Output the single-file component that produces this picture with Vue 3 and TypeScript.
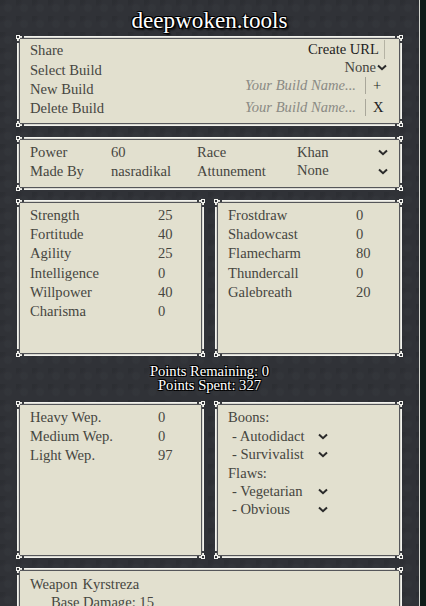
<script setup lang="ts">
const attrs = [
  ['Strength', 25], ['Fortitude', 40], ['Agility', 25],
  ['Intelligence', 0], ['Willpower', 40], ['Charisma', 0],
]
const elements = [
  ['Frostdraw', 0], ['Shadowcast', 0], ['Flamecharm', 80],
  ['Thundercall', 0], ['Galebreath', 20],
]
const weapons = [['Heavy Wep.', 0], ['Medium Wep.', 0], ['Light Wep.', 97]]
const corners = ['tl', 'tr', 'bl', 'br']
</script>

<template>
  <div class="page">
    <main class="content">
      <h1 class="title">deepwoken.tools</h1>

      <section class="panel build">
        <i v-for="c in corners" :key="c" class="corner" :class="c"></i>
        <div class="build-row r1">
          <span>Share</span>
          <span class="url">Create URL</span>
        </div>
        <div class="build-row r2">
          <span>Select Build</span>
          <span class="none">None<svg class="chev" viewBox="0 0 10 7"><path d="M1 1.5 5 5.2 9 1.5" /></svg></span>
        </div>
        <div class="build-row r3">
          <span>New Build</span>
          <span class="field"><em>Your Build Name...</em><b class="plus">+</b></span>
        </div>
        <div class="build-row r4">
          <span>Delete Build</span>
          <span class="field"><em>Your Build Name...</em><b class="x">X</b></span>
        </div>
      </section>

      <section class="panel info">
        <i v-for="c in corners" :key="c" class="corner" :class="c"></i>
        <div class="info-grid">
          <span>Power</span><span>60</span><span>Race</span>
          <span class="pick">Khan<svg class="chev" viewBox="0 0 10 7"><path d="M1 1.5 5 5.2 9 1.5" /></svg></span>
          <span>Made By</span><span>nasradikal</span><span>Attunement</span>
          <span class="pick up">None<svg class="chev" viewBox="0 0 10 7"><path d="M1 1.5 5 5.2 9 1.5" /></svg></span>
        </div>
      </section>

      <div class="pair">
        <section class="panel tall">
          <i v-for="c in corners" :key="c" class="corner" :class="c"></i>
          <div v-for="a in attrs" :key="a[0]" class="stat"><span>{{ a[0] }}</span><span>{{ a[1] }}</span></div>
        </section>
        <section class="panel tall">
          <i v-for="c in corners" :key="c" class="corner" :class="c"></i>
          <div v-for="a in elements" :key="a[0]" class="stat"><span>{{ a[0] }}</span><span>{{ a[1] }}</span></div>
        </section>
      </div>

      <div class="points">
        <div>Points Remaining: 0</div>
        <div>Points Spent: 327</div>
      </div>

      <div class="pair">
        <section class="panel tall">
          <i v-for="c in corners" :key="c" class="corner" :class="c"></i>
          <div v-for="a in weapons" :key="a[0]" class="stat"><span>{{ a[0] }}</span><span>{{ a[1] }}</span></div>
        </section>
        <section class="panel tall talents">
          <i v-for="c in corners" :key="c" class="corner" :class="c"></i>
          <div class="tlabel">Boons:</div>
          <div class="talent first"><span>- Autodidact</span><svg class="chev" viewBox="0 0 10 7"><path d="M1 1.5 5 5.2 9 1.5" /></svg></div>
          <div class="talent"><span>- Survivalist</span><svg class="chev" viewBox="0 0 10 7"><path d="M1 1.5 5 5.2 9 1.5" /></svg></div>
          <div class="tlabel">Flaws:</div>
          <div class="talent second"><span>- Vegetarian</span><svg class="chev" viewBox="0 0 10 7"><path d="M1 1.5 5 5.2 9 1.5" /></svg></div>
          <div class="talent"><span>- Obvious</span><svg class="chev" viewBox="0 0 10 7"><path d="M1 1.5 5 5.2 9 1.5" /></svg></div>
        </section>
      </div>

      <section class="panel weapon">
        <i v-for="c in corners" :key="c" class="corner" :class="c"></i>
        <div class="wline"><span>Weapon</span><span>Kyrstreza</span></div>
        <div class="wsub">Base Damage: 15</div>
      </section>
    </main>
    <div class="edge"></div>
  </div>
</template>

<style>
html, body { margin: 0; height: 100%; overflow: hidden; background: #2e3035; }
</style>

<style scoped>
.page {
  display: flex;
  height: 606px;
  overflow: hidden;
  font: 14.6px/19.2px "Liberation Serif", serif;
  color: #46463f;
}
.content {
  width: 419px;
  flex: none;
  box-sizing: border-box;
  padding: 0 16px;
  background-color: #303237;
  background-image:
    radial-gradient(circle at 50% 50%, rgba(70, 74, 80, .14) 0 3px, transparent 5px),
    radial-gradient(circle at 0 0, rgba(20, 22, 26, .12) 0 4px, transparent 7px);
  background-size: 16px 16px;
}
.edge {
  flex: 1;
  background: #0e1c18;
  border-left: 1px solid #d5d7d0;
}
.title {
  margin: 0;
  height: 36px;
  box-sizing: border-box;
  padding-top: 6px;
  text-align: center;
  font: 400 23.1px/28px "Liberation Serif", serif;
  color: #fff;
  text-shadow: 1px 1px 0 #000, -1px 1px 0 #000, 1px -1px 0 #000, -1px -1px 0 #000, 2px 2px 2px #000;
}
.panel {
  position: relative;
  box-sizing: border-box;
  background: #e2e0cf padding-box;
  border: solid transparent;
  border-width: 0 1px;
  box-shadow: inset 0 0 0 1px #f2f2ee, inset 0 0 0 2px #d8d8d0, inset 0 0 0 3px #55565a;
  margin-bottom: 10px;
}
.corner {
  position: absolute;
  width: 2px;
  height: 2px;
  border: 1px solid #f4f4f0;
  background: #34363a;
}
.corner::before, .corner::after {
  content: "";
  position: absolute;
  width: 2px;
  height: 2px;
  background: #3a3c40;
}
.tl { left: -1px; top: -1px; }
.tr { right: -1px; top: -1px; }
.bl { left: -1px; bottom: -1px; }
.br { right: -1px; bottom: -1px; }
.tl::before { left: 5px; top: 0; }
.tl::after { left: 0; top: 5px; }
.tr::before { right: 5px; top: 0; }
.tr::after { right: 0; top: 5px; }
.bl::before { left: 5px; bottom: 0; }
.bl::after { left: 0; bottom: 5px; }
.br::before { right: 5px; bottom: 0; }
.br::after { right: 0; bottom: 5px; }

.build {
  height: 90px;
  padding: 5px 17px 0 13px;
  margin-bottom: 11px;
}
.build-row {
  display: flex;
  justify-content: space-between;
  align-items: center;
  height: 19.2px;
}
.r1 { height: 20px; align-items: flex-start; }
.url {
  color: #1e1e1e;
  border-right: 1px solid #b5b3a4;
  padding-right: 5px;
  margin-top: -1px;
}
.none { display: flex; align-items: center; margin: -6px -2px 0 0; }
.none .chev { margin-left: 1px; }
.field {
  display: flex;
  align-items: center;
  align-self: flex-start;
  height: 19px;
  width: 140px;
}
.r3 .field { margin-top: -4px; }
.r4 .field { margin-top: -1.5px; }
.field em {
  flex: none;
  width: 120px;
  color: #8a8a84;
  border-right: 1px solid #a9a79a;
  line-height: 17px;
}
.field b { font-weight: 400; color: #1e1e1e; margin-left: 7px; }

.info { height: 53px; padding: 6px 13px 0; }
.info-grid {
  display: grid;
  grid-template-columns: 81px 86px 100px 1fr;
  grid-auto-rows: 19.2px;
  align-items: center;
}
.pick { display: flex; justify-content: space-between; align-items: center; padding-right: 1px; }
.pick.up { position: relative; top: -1px; }
.pick.up .chev { position: relative; top: 1px; }

.pair { display: flex; gap: 9px; }
.pair > .panel { flex: 1; min-width: 0; }
.tall { height: 156px; padding: 6px 13px 0; }
.stat { display: grid; grid-template-columns: 128px 1fr; height: 19.2px; align-items: center; }

.points {
  box-sizing: border-box;
  height: 46px;
  margin-top: -10px;
  padding-top: 8px;
  text-align: center;
  line-height: 14px;
  color: #fff;
  text-shadow: 1px 1px 0 #000, -1px 1px 0 #000, 1px -1px 0 #000, -1px -1px 0 #000;
}

.tlabel { height: 17.5px; line-height: 18px; }
.talent {
  display: grid;
  grid-template-columns: 86px 10px;
  padding-left: 4px;
  height: 18.3px;
  align-items: center;
}
.talent.first { margin-top: 1.5px; }
.talent.second { margin-top: 1px; }

.weapon { height: 60px; padding: 7px 13px 0; margin-bottom: 0; }
.wline { display: flex; gap: 5px; height: 19.2px; align-items: center; }
.wsub { padding-left: 21px; line-height: 15px; margin-top: 1px; }

.chev {
  width: 10px;
  height: 7px;
  flex: none;
  overflow: visible;
}
.chev path {
  fill: none;
  stroke: #2a2a2a;
  stroke-width: 2;
}
</style>
